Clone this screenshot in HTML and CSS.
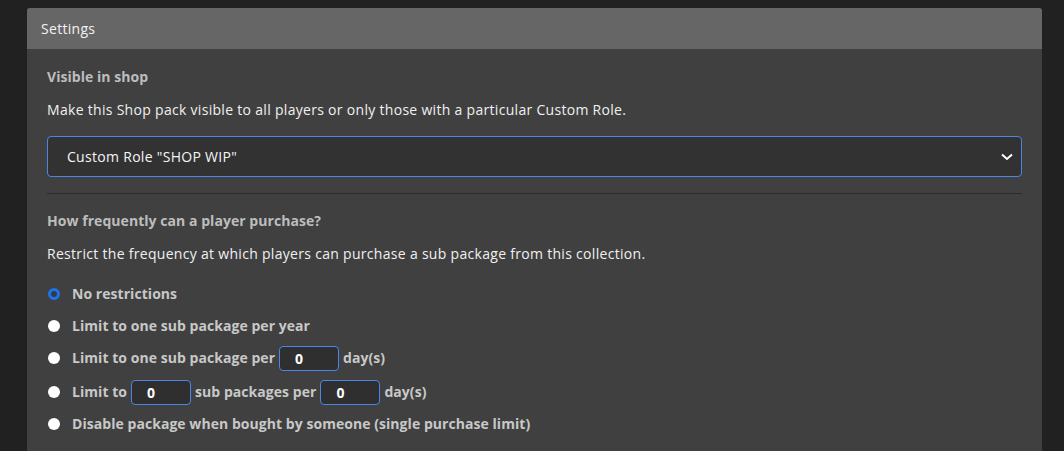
FILE: index.html
```html
<!DOCTYPE html>
<html lang="en">
<head>
<meta charset="utf-8">
<title>Settings</title>
<link rel="stylesheet" href="styles.css">
</head>
<body>
<section class="card">
  <header class="card-header">Settings</header>
  <div class="card-body">
    <h3 class="field-title">Visible in shop</h3>
    <p class="field-desc">Make this Shop pack visible to all players or only those with a particular Custom Role.</p>
    <div class="select">
      <span class="select-value">Custom Role "SHOP WIP"</span>
      <svg class="chevron" width="12" height="8" viewBox="0 0 12 8"><path d="M1 1.5 L6 6 L11 1.5" fill="none" stroke="#fff" stroke-width="2"/></svg>
    </div>
    <hr class="divider">
    <h3 class="field-title">How frequently can a player purchase?</h3>
    <p class="field-desc">Restrict the frequency at which players can purchase a sub package from this collection.</p>
    <div class="radios">
      <label class="radio-row"><input type="radio" name="freq" checked><span>No restrictions</span></label>
      <label class="radio-row"><input type="radio" name="freq"><span>Limit to one sub package per year</span></label>
      <label class="radio-row"><input type="radio" name="freq"><span>Limit to one sub package per</span><input class="num" type="text" value="0"><span>day(s)</span></label>
      <label class="radio-row row-gap"><input type="radio" name="freq"><span>Limit to</span><input class="num" type="text" value="0"><span>sub packages per</span><input class="num" type="text" value="0"><span>day(s)</span></label>
      <label class="radio-row"><input type="radio" name="freq"><span>Disable package when bought by someone (single purchase limit)</span></label>
    </div>
  </div>
</section>
</body>
</html>
```

FILE: styles.css
```css
html, body {
  margin: 0;
  background: #212121;
  font-family: "Open Sans", "Noto Sans", sans-serif;
  font-size: 14px;
  line-height: 20px;
}
body {
  padding: 8px 22px 0 27px;
  height: 451px;
  box-sizing: border-box;
  overflow: hidden;
}
.card {
  background: #404040;
  border-radius: 3px 3px 0 0;
  height: 460px;
}
.card-header {
  background: #666666;
  color: #f2f2f2;
  height: 41px;
  line-height: 41px;
  padding: 0 14px;
  letter-spacing: 0.3px;
  border-radius: 3px 3px 0 0;
}
.card-body {
  padding: 18px 20px 0 20px;
}
.field-title {
  margin: 0;
  font-size: 14px;
  font-weight: 700;
  color: #bdbdbd;
  line-height: 20px;
  letter-spacing: 0.05px;
}
.field-desc {
  margin: 13px 0 0 0;
  color: #f0f0f0;
  line-height: 20px;
  letter-spacing: 0.3px;
}
.select {
  margin-top: 16px;
  height: 41px;
  box-sizing: border-box;
  border: 1px solid #4a86e8;
  border-radius: 4px;
  background: #323232;
  color: #f5f5f5;
  letter-spacing: 0.3px;
  display: flex;
  align-items: center;
  justify-content: space-between;
  padding: 0 8px 0 19px;
}
.chevron {
  display: block;
}
.divider {
  margin: 16px 0 0 0;
  border: 0;
  border-top: 1px solid #2c2c2c;
  height: 0;
}
.divider + .field-title {
  margin-top: 17px;
}
.radios {
  margin-top: 17px;
  display: flex;
  flex-direction: column;
  gap: 6px;
}
.radio-row {
  display: flex;
  align-items: center;
  height: 26px;
  color: #c8c8c8;
  font-weight: 700;
  letter-spacing: 0.05px;
}
.row-gap {
  margin-top: 2px;
}
.radio-row input[type="radio"] {
  appearance: none;
  -webkit-appearance: none;
  margin: 0 12px 0 1px;
  width: 12px;
  height: 12px;
  border-radius: 50%;
  background: #ffffff;
  box-sizing: border-box;
  flex: none;
}
.radio-row input[type="radio"]:checked {
  background: #3a3a3a;
  border: 3px solid #1a73f0;
}
.num {
  width: 60px;
  height: 25px;
  box-sizing: border-box;
  margin: 0 4px;
  border: 1px solid #4a86e8;
  border-radius: 4px;
  background: #2f2f2f;
  color: #ffffff;
  font-family: inherit;
  font-size: 14px;
  font-weight: 700;
  padding: 0 0 0 15px;
  outline: none;
}
```
